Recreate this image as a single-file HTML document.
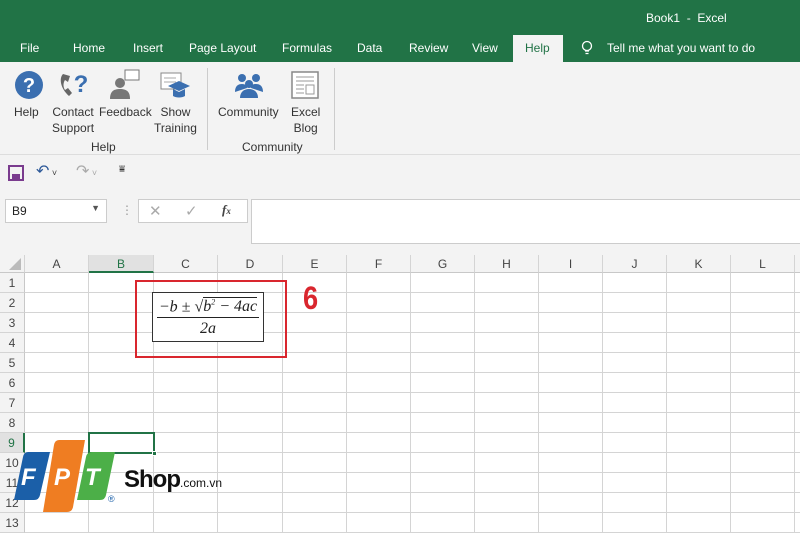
<!DOCTYPE html>
<html><head><meta charset="utf-8"><style>
*{margin:0;padding:0;box-sizing:border-box}
body{width:800px;height:533px;overflow:hidden;background:#fff;font-family:"Liberation Sans",sans-serif;position:relative;font-size:12px;color:#222}
.abs{position:absolute}
.top{left:0;top:0;width:800px;height:62px;background:#217346}
.tab{position:absolute;top:41px;color:#fff;font-size:12px}
.rib{left:0;top:62px;width:800px;height:93px;background:#f3f3f3;border-bottom:1px solid #ddd}
.lbl{position:absolute;font-size:12px;color:#333;text-align:center;line-height:16px}
.qa{left:0;top:155px;width:800px;height:100px;background:#f3f3f3}
.grid{left:0;top:255px;width:800px;height:278px}
.ch{position:absolute;top:0;height:18px;border-right:1px solid #d4d4d4;text-align:center;line-height:18px;color:#444;font-size:12px;background:#f3f3f3;border-bottom:1px solid #c8c8c8}
.rh{position:absolute;left:0;width:25px;height:20px;background:#f3f3f3;border-bottom:1px solid #d4d4d4;border-right:1px solid #c8c8c8;font-size:12px;color:#444;text-align:center;line-height:20px}
</style></head><body>
<div class="abs top"></div>
<div class="abs" style="left:646px;top:11px;color:#fff;font-size:12px">Book1 &nbsp;-&nbsp; Excel</div>
<div class="tab" style="left:20px">File</div>
<div class="tab" style="left:73px">Home</div>
<div class="tab" style="left:133px">Insert</div>
<div class="tab" style="left:189px">Page Layout</div>
<div class="tab" style="left:282px">Formulas</div>
<div class="tab" style="left:357px">Data</div>
<div class="tab" style="left:409px">Review</div>
<div class="tab" style="left:472px">View</div>
<div class="abs" style="left:513px;top:35px;width:50px;height:27px;background:#f3f3f3"></div>
<div class="tab" style="left:525px;color:#217346">Help</div>
<svg class="abs" style="left:580px;top:40px" width="14" height="16"><circle cx="7" cy="6" r="4.5" fill="none" stroke="#fff" stroke-width="1.3"/><path d="M5 11h4M5.5 13.5h3" stroke="#fff" stroke-width="1.3"/></svg>
<div class="tab" style="left:607px">Tell me what you want to do</div>

<div class="abs rib"></div>
<svg class="abs" style="left:14px;top:70px" width="30" height="30"><circle cx="15" cy="15" r="14" fill="#3b6fb0"/><text x="15" y="22" text-anchor="middle" fill="#fff" font-size="20" font-weight="bold" font-family="Liberation Sans">?</text></svg>
<svg class="abs" style="left:57px;top:70px" width="34" height="30"><path d="M6 4c-4 4-3 14 6 22l3-3-4-5-3 2c-2-3-2-7 0-10l3 2 2-6z" fill="#666"/><text x="24" y="22" text-anchor="middle" fill="#3b6fb0" font-size="24" font-weight="bold" font-family="Liberation Sans">?</text></svg>
<svg class="abs" style="left:108px;top:69px" width="34" height="32"><rect x="17" y="1" width="14" height="10" fill="#fff" stroke="#777"/><circle cx="12" cy="14" r="5" fill="#777"/><path d="M2 30c0-8 4-10 10-10s10 2 10 10z" fill="#777"/></svg>
<svg class="abs" style="left:160px;top:72px" width="32" height="28"><rect x="1" y="1" width="20" height="16" fill="#fff" stroke="#888"/><path d="M4 6h12M4 10h12" stroke="#aaa"/><path d="M8 14l11-5 11 5-11 5z" fill="#3b6fb0"/><path d="M13 17v7c3 2 9 2 12 0v-7l-6 3z" fill="#3b6fb0"/></svg>
<div class="lbl" style="left:14px;top:104px">Help</div>
<div class="lbl" style="left:52px;top:104px">Contact<br>Support</div>
<div class="lbl" style="left:99px;top:104px">Feedback</div>
<div class="lbl" style="left:154px;top:104px">Show<br>Training</div>
<div class="lbl" style="left:91px;top:139px">Help</div>
<div class="abs" style="left:207px;top:68px;width:1px;height:82px;background:#ccc"></div>
<svg class="abs" style="left:234px;top:72px" width="30" height="26"><circle cx="8" cy="6" r="4" fill="#3b6fb0"/><circle cx="22" cy="6" r="4" fill="#3b6fb0"/><circle cx="15" cy="12" r="4" fill="#3b6fb0"/><path d="M1 20c0-6 3-8 7-8s5 2 5 4M29 20c0-6-3-8-7-8s-5 2-5 4" fill="#3b6fb0"/><path d="M6 26c0-6 4-9 9-9s9 3 9 9z" fill="#3b6fb0"/></svg>
<svg class="abs" style="left:291px;top:71px" width="28" height="28"><rect x="1" y="1" width="26" height="26" fill="#fff" stroke="#888" stroke-width="1.5"/><path d="M5 6h18M5 10h18M5 14h8M5 18h8M5 22h8" stroke="#999"/><rect x="15" y="14" width="8" height="9" fill="none" stroke="#999"/></svg>
<div class="lbl" style="left:218px;top:104px">Community</div>
<div class="lbl" style="left:291px;top:104px">Excel<br>Blog</div>
<div class="lbl" style="left:242px;top:139px">Community</div>
<div class="abs" style="left:334px;top:68px;width:1px;height:82px;background:#ccc"></div>

<div class="abs qa"></div>
<svg class="abs" style="left:8px;top:165px" width="16" height="16"><rect x="1" y="1" width="14" height="14" fill="none" stroke="#7a3b8e" stroke-width="2"/><rect x="4" y="9" width="8" height="5" fill="#7a3b8e"/></svg>
<div class="abs" style="left:36px;top:161px;color:#2b5797;font-size:16px">↶<span style="font-size:9px;color:#444"> ˅</span></div>
<div class="abs" style="left:76px;top:161px;color:#aaa;font-size:16px">↷<span style="font-size:9px"> ˅</span></div>
<div class="abs" style="left:119px;top:164px;font-size:10px;color:#333">⩸</div>
<div class="abs" style="left:5px;top:199px;width:102px;height:24px;background:#fff;border:1px solid #ccc;padding:4px 6px;font-size:12px">B9<span style="position:absolute;right:6px;top:3px;font-size:9px;color:#555">▼</span></div>
<div class="abs" style="left:121px;top:203px;color:#999;font-size:12px">⋮</div>
<div class="abs" style="left:138px;top:199px;width:110px;height:24px;background:#fff;border:1px solid #ccc"></div>
<div class="abs" style="left:149px;top:202px;color:#aaa;font-size:15px">✕</div>
<div class="abs" style="left:185px;top:202px;color:#aaa;font-size:15px">✓</div>
<div class="abs" style="left:222px;top:202px;color:#444;font-size:13px;font-style:italic;font-family:'Liberation Serif',serif;font-weight:bold">f<span style="font-size:9px">x</span></div>
<div class="abs" style="left:251px;top:199px;width:549px;height:45px;background:#fff;border:1px solid #ccc;border-right:none"></div>

<div class="abs grid">
<div class="ch" style="left:0;width:25px"><svg width="12" height="12" style="position:absolute;right:3px;bottom:2px"><path d="M12 0v12H0z" fill="#bbb"/></svg></div>
<div class="ch" style="left:25px;width:64px">A</div>
<div class="ch" style="left:89px;width:65px;background:#e1e1e1;color:#217346;border-bottom:2px solid #217346">B</div>
<div class="ch" style="left:154px;width:64px">C</div>
<div class="ch" style="left:218px;width:65px">D</div>
<div class="ch" style="left:283px;width:64px">E</div>
<div class="ch" style="left:347px;width:64px">F</div>
<div class="ch" style="left:411px;width:64px">G</div>
<div class="ch" style="left:475px;width:64px">H</div>
<div class="ch" style="left:539px;width:64px">I</div>
<div class="ch" style="left:603px;width:64px">J</div>
<div class="ch" style="left:667px;width:64px">K</div>
<div class="ch" style="left:731px;width:64px">L</div>
<div class="ch" style="left:795px;width:10px"></div>
<div class="abs" style="left:0;top:18px;width:800px;height:260px;background-image:repeating-linear-gradient(to bottom,transparent 0 19px,#d4d4d4 19px 20px),linear-gradient(to right,transparent 88px,#d4d4d4 88px 89px,transparent 89px 153px,#d4d4d4 153px 154px,transparent 154px 217px,#d4d4d4 217px 218px,transparent 218px 282px,#d4d4d4 282px 283px,transparent 283px 346px,#d4d4d4 346px 347px,transparent 347px 410px,#d4d4d4 410px 411px,transparent 411px 474px,#d4d4d4 474px 475px,transparent 475px 538px,#d4d4d4 538px 539px,transparent 539px 602px,#d4d4d4 602px 603px,transparent 603px 666px,#d4d4d4 666px 667px,transparent 667px 730px,#d4d4d4 730px 731px,transparent 731px 794px,#d4d4d4 794px 795px,transparent 795px)"></div>
<div class="rh" style="top:18px">1</div><div class="rh" style="top:38px">2</div><div class="rh" style="top:58px">3</div><div class="rh" style="top:78px">4</div><div class="rh" style="top:98px">5</div><div class="rh" style="top:118px">6</div><div class="rh" style="top:138px">7</div><div class="rh" style="top:158px">8</div><div class="rh" style="top:178px;background:#e1e1e1;color:#217346;border-right:2px solid #217346">9</div><div class="rh" style="top:198px">10</div><div class="rh" style="top:218px">11</div><div class="rh" style="top:238px">12</div><div class="rh" style="top:258px">13</div>
</div>
<div class="abs" style="left:88px;top:432px;width:67px;height:22px;border:2px solid #217346"></div>
<div class="abs" style="left:152px;top:451px;width:5px;height:5px;background:#217346;border:1px solid #fff"></div>

<div class="abs" style="left:135px;top:280px;width:152px;height:78px;border:2px solid #d9262e"></div>
<div class="abs" style="left:152px;top:292px;width:112px;height:50px;border:1px solid #333;background:#fff;font-family:'Liberation Serif',serif;font-style:italic;font-size:16px;text-align:center">
<div style="position:absolute;left:4px;top:5px;width:102px;white-space:nowrap">−b ± √<span style="border-top:1px solid #222">b<sup style="font-size:8px">2</sup> − 4ac</span></div>
<div style="position:absolute;left:4px;top:24px;width:102px;height:1px;background:#222"></div>
<div style="position:absolute;left:0;top:27px;width:110px">2a</div>
</div>
<div class="abs" style="left:303px;top:280px;color:#d9262e;font-size:32px;font-weight:bold;font-family:'Liberation Sans',sans-serif;transform:scaleX(0.85);transform-origin:left">6</div>

<svg class="abs" style="left:12px;top:438px" width="110" height="76">
<path d="M16 14H38L28 57Q27 62 22 62H2L11 19Q12 14 16 14z" fill="#1b5fa8"/>
<path d="M47 2H73L61 69Q60 74 55 74H31L42 7Q43 2 47 2z" fill="#ef7d22"/>
<path d="M80 14H103L94 57Q93 62 88 62H65L74 19Q75 14 80 14z" fill="#4caf48"/>
<text x="9" y="47" font-size="24" font-style="italic" font-weight="bold" fill="#fff" font-family="Liberation Sans">F</text>
<text x="42" y="47" font-size="24" font-style="italic" font-weight="bold" fill="#fff" font-family="Liberation Sans">P</text>
<text x="73" y="47" font-size="24" font-style="italic" font-weight="bold" fill="#fff" font-family="Liberation Sans">T</text>
</svg>
<div class="abs" style="left:108px;top:494px;font-size:9px;color:#1b5fa8">®</div>
<div class="abs" style="left:124px;top:466px;font-size:24px;font-weight:bold;color:#111;letter-spacing:-1px">Shop<span style="font-size:12px;font-weight:normal;letter-spacing:0">.com.vn</span></div>
</body></html>
